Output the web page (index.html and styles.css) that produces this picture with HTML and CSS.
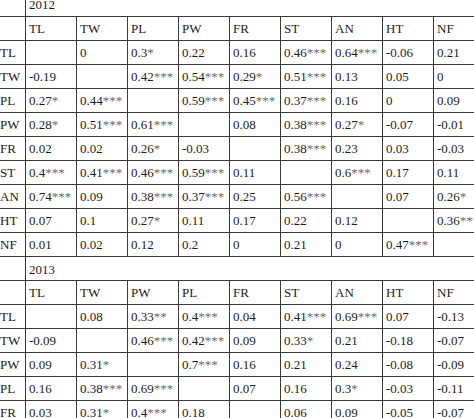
FILE: index.html
```html
<!DOCTYPE html>
<html>
<head>
<meta charset="utf-8">
<link rel="stylesheet" href="styles.css">
</head>
<body>
<table class="corr">
<colgroup><col class="c-lab"><col class="c-val"><col class="c-val"><col class="c-val"><col class="c-val"><col class="c-val"><col class="c-val"><col class="c-val"><col class="c-val"><col class="c-val"></colgroup>
<tbody>
<tr class="year"><td class="lab"></td><td colspan="9">2012</td></tr>
<tr class="head"><td class="lab"></td><td>TL</td><td>TW</td><td>PL</td><td>PW</td><td>FR</td><td>ST</td><td>AN</td><td>HT</td><td>NF</td></tr>
<tr><td class="lab">TL</td><td></td><td>0</td><td>0.3<span class="sig">*</span></td><td>0.22</td><td>0.16</td><td>0.46<span class="sig">***</span></td><td>0.64<span class="sig">***</span></td><td>-0.06</td><td>0.21</td></tr>
<tr><td class="lab">TW</td><td>-0.19</td><td></td><td>0.42<span class="sig">***</span></td><td>0.54<span class="sig">***</span></td><td>0.29<span class="sig">*</span></td><td>0.51<span class="sig">***</span></td><td>0.13</td><td>0.05</td><td>0</td></tr>
<tr><td class="lab">PL</td><td>0.27<span class="sig">*</span></td><td>0.44<span class="sig">***</span></td><td></td><td>0.59<span class="sig">***</span></td><td>0.45<span class="sig">***</span></td><td>0.37<span class="sig">***</span></td><td>0.16</td><td>0</td><td>0.09</td></tr>
<tr><td class="lab">PW</td><td>0.28<span class="sig">*</span></td><td>0.51<span class="sig">***</span></td><td>0.61<span class="sig">***</span></td><td></td><td>0.08</td><td>0.38<span class="sig">***</span></td><td>0.27<span class="sig">*</span></td><td>-0.07</td><td>-0.01</td></tr>
<tr><td class="lab">FR</td><td>0.02</td><td>0.02</td><td>0.26<span class="sig">*</span></td><td>-0.03</td><td></td><td>0.38<span class="sig">***</span></td><td>0.23</td><td>0.03</td><td>-0.03</td></tr>
<tr><td class="lab">ST</td><td>0.4<span class="sig">***</span></td><td>0.41<span class="sig">***</span></td><td>0.46<span class="sig">***</span></td><td>0.59<span class="sig">***</span></td><td>0.11</td><td></td><td>0.6<span class="sig">***</span></td><td>0.17</td><td>0.11</td></tr>
<tr><td class="lab">AN</td><td>0.74<span class="sig">***</span></td><td>0.09</td><td>0.38<span class="sig">***</span></td><td>0.37<span class="sig">***</span></td><td>0.25</td><td>0.56<span class="sig">***</span></td><td></td><td>0.07</td><td>0.26<span class="sig">*</span></td></tr>
<tr><td class="lab">HT</td><td>0.07</td><td>0.1</td><td>0.27<span class="sig">*</span></td><td>0.11</td><td>0.17</td><td>0.22</td><td>0.12</td><td></td><td>0.36<span class="sig">***</span></td></tr>
<tr><td class="lab">NF</td><td>0.01</td><td>0.02</td><td>0.12</td><td>0.2</td><td>0</td><td>0.21</td><td>0</td><td>0.47<span class="sig">***</span></td><td></td></tr>
<tr class="year"><td class="lab"></td><td colspan="9">2013</td></tr>
<tr class="head"><td class="lab"></td><td>TL</td><td>TW</td><td>PW</td><td>PL</td><td>FR</td><td>ST</td><td>AN</td><td>HT</td><td>NF</td></tr>
<tr><td class="lab">TL</td><td></td><td>0.08</td><td>0.33<span class="sig">**</span></td><td>0.4<span class="sig">***</span></td><td>0.04</td><td>0.41<span class="sig">***</span></td><td>0.69<span class="sig">***</span></td><td>0.07</td><td>-0.13</td></tr>
<tr><td class="lab">TW</td><td>-0.09</td><td></td><td>0.46<span class="sig">***</span></td><td>0.42<span class="sig">***</span></td><td>0.09</td><td>0.33<span class="sig">*</span></td><td>0.21</td><td>-0.18</td><td>-0.07</td></tr>
<tr><td class="lab">PW</td><td>0.09</td><td>0.31<span class="sig">*</span></td><td></td><td>0.7<span class="sig">***</span></td><td>0.16</td><td>0.21</td><td>0.24</td><td>-0.08</td><td>-0.09</td></tr>
<tr><td class="lab">PL</td><td>0.16</td><td>0.38<span class="sig">***</span></td><td>0.69<span class="sig">***</span></td><td></td><td>0.07</td><td>0.16</td><td>0.3<span class="sig">*</span></td><td>-0.03</td><td>-0.11</td></tr>
<tr><td class="lab">FR</td><td>0.03</td><td>0.31<span class="sig">*</span></td><td>0.4<span class="sig">***</span></td><td>0.18</td><td></td><td>0.06</td><td>0.09</td><td>-0.05</td><td>-0.07</td></tr>
</tbody>
</table>
</body>
</html>
```

FILE: styles.css
```css
html, body {
  margin: 0;
  padding: 0;
  background: #fff;
  overflow: hidden;
  width: 474px;
  height: 418px;
}

.corr {
  border-collapse: collapse;
  table-layout: fixed;
  width: 488px;
  margin-top: -8px;
  margin-left: -4px;
  font-family: "Liberation Serif", "Times New Roman", serif;
  font-size: 13px;
  color: #1c1c1c;
}

.corr .c-lab {
  width: 29px;
}

.corr .c-val {
  width: 51px;
}

.corr td {
  height: 24px;
  padding: 1px 0 0 3px;
  border: 1px solid #3a3a3a;
  box-sizing: border-box;
  text-align: left;
  vertical-align: middle;
  white-space: nowrap;
  overflow: hidden;
  line-height: 14px;
}

.corr tr:first-child td {
  border-top: none;
}

.corr .year td {
  padding-top: 3px;
}

.corr .sig {
  color: #6a6a6a;
}
```
